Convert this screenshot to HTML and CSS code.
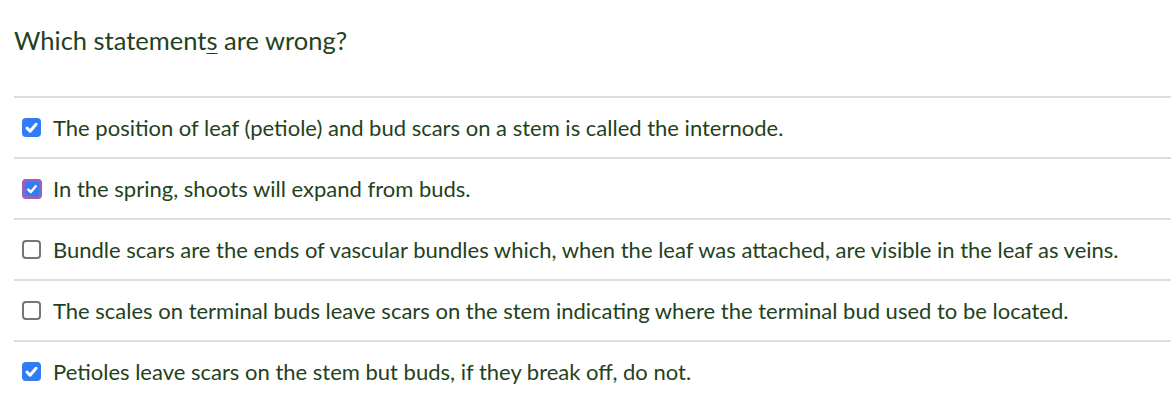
FILE: index.html
```html
<!DOCTYPE html>
<html lang="en">
<head>
  <meta charset="UTF-8">
  <title>Quiz Question</title>
  <link rel="stylesheet" href="styles.css">
</head>
<body>
  <div class="question">
    <h2 class="prompt">Which statement<u>s</u> are wrong?</h2>
    <div class="answers">
      <label class="answer">
        <span class="box checked"><svg viewBox="0 0 16 16"><path d="M3.8 8.6l2.9 2.9 5.6-6.6" /></svg></span>
        <span class="text">The position of leaf (petiole) and bud scars on a stem is called the internode.</span>
      </label>
      <label class="answer">
        <span class="box checked focused"><svg viewBox="0 0 16 16"><path d="M3.8 8.6l2.9 2.9 5.6-6.6" /></svg></span>
        <span class="text">In the spring, shoots will expand from buds.</span>
      </label>
      <label class="answer">
        <span class="box"></span>
        <span class="text">Bundle scars are the ends of vascular bundles which, when the leaf was attached, are visible in the leaf as veins.</span>
      </label>
      <label class="answer">
        <span class="box"></span>
        <span class="text">The scales on terminal buds leave scars on the stem indicating where the terminal bud used to be located.</span>
      </label>
      <label class="answer">
        <span class="box checked"><svg viewBox="0 0 16 16"><path d="M3.8 8.6l2.9 2.9 5.6-6.6" /></svg></span>
        <span class="text">Petioles leave scars on the stem but buds, if they break off, do not.</span>
      </label>
    </div>
  </div>
</body>
</html>
```

FILE: styles.css
```css
* { box-sizing: border-box; }
body {margin: 0;padding: 0 0 0 14px;background: #fff;font-family: Lato, 'Open Sans', sans-serif;color: #1f4220;}
.prompt {margin: 0;padding: 24px 0 0;height: 96px;font-size: 25.5px;font-weight: normal;line-height: 32px;}
.prompt u {text-decoration-thickness: 1px;text-underline-offset: 3px;}
.answers {display: flex;flex-direction: column;}
.answer {display: flex;align-items: center;gap: 12px;height: 61px;padding-left: 8px;border-top: 2px solid #dcdcdc;font-size: 22px;}
.box {width: 19px;height: 19px;flex: none;display: flex;align-items: center;justify-content: center;border: 2px solid #767676;border-radius: 4px;background: #fff;}
.box.checked {border: none;background: #2f7cf6;}
.box svg {width: 17px;height: 17px;fill: none;stroke: #fff;stroke-width: 2.8;stroke-linecap: round;stroke-linejoin: round;}
.box.focused {width: 20px;height: 20px;border: 3px solid #9a62b6;border-radius: 4px;margin: 0 -1px 0 0;}
.box.focused svg {width: 14px;height: 14px;}
.text {line-height: 24px;}
```
